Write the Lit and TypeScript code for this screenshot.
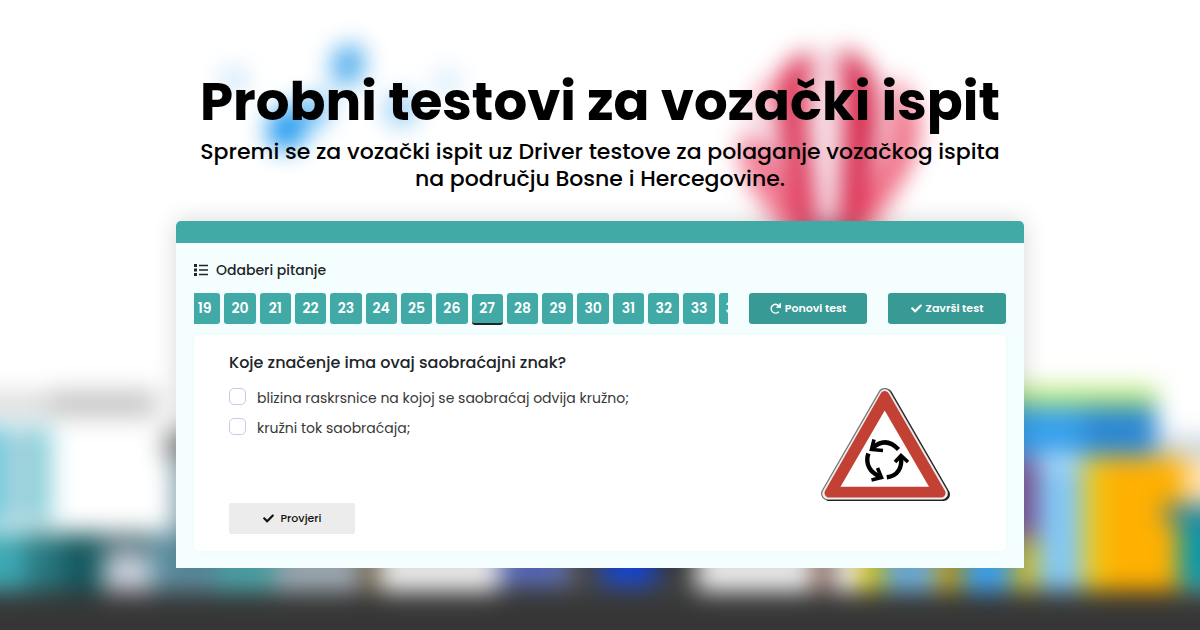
import { LitElement, html, svg, css } from "lit";
import { customElement, state } from "lit/decorators.js";

type Block = [x: number, y: number, w: number, h: number, fill: string];

const BLOCKS: Block[] = [
  // left building
  [-40, 394, 95, 20, "#d6d6d6"],
  [50, 391, 107, 26, "#c4c4c4"],
  [-40, 426, 48, 98, "#70cbe0"],
  [8, 426, 18, 98, "#b8d6de"],
  [26, 426, 25, 98, "#86ced8"],
  [164, 432, 60, 26, "#888888"],
  [172, 458, 60, 74, "#9dbcc8"],
  [-40, 533, 68, 80, "#3da8b2"],
  [26, 533, 40, 80, "#2a7880"],
  [62, 533, 42, 80, "#15595f"],
  [100, 533, 66, 24, "#4c6c74"],
  [150, 533, 70, 80, "#5e90a2"],
  // street level
  [216, 540, 60, 70, "#4fa9ad"],
  [276, 540, 84, 70, "#a5b2bb"],
  [362, 540, 15, 70, "#503a18"],
  [377, 540, 121, 70, "#f8f8f8"],
  [500, 540, 66, 44, "#5c70c8"],
  [568, 540, 34, 52, "#4a4a4a"],
  [602, 540, 54, 44, "#1448e4"],
  [656, 540, 40, 52, "#3c3c3c"],
  [700, 540, 112, 70, "#f8f8f8"],
  [814, 540, 18, 70, "#80584a"],
  [832, 540, 28, 70, "#fafafa"],
  [860, 540, 22, 70, "#e0cc00"],
  [882, 540, 54, 70, "#72b6e0"],
  [938, 540, 24, 70, "#c89c00"],
  [962, 540, 50, 70, "#42aaf8"],
  [1012, 530, 28, 80, "#d4bc24"],
  // right building
  [980, 387, 177, 19, "#b9ea74"],
  [980, 406, 104, 50, "#38a0ec"],
  [1084, 406, 73, 50, "#2c88d2"],
  [1156, 436, 80, 22, "#c9d6e2"],
  [980, 458, 58, 80, "#805898"],
  [1038, 464, 46, 150, "#82c8f6"],
  [1082, 457, 24, 155, "#ecc91c"],
  [1104, 457, 82, 155, "#ffb000"],
  [1184, 458, 60, 44, "#ffe2b0"],
  [1164, 504, 80, 18, "#3a7c98"],
  [1178, 520, 70, 68, "#0c97a8"],
];

const CHECK =
  "M173.9 439.4 7.5 273c-10-10-10-26.2 0-36.200l36.200-36.200c10-10 26.200-10 36.200 0L192 312.700 432.100 72.600c10-10 26.200-10 36.200 0l36.200 36.200c10 10 10 26.200 0 36.200L210.100 439.400c-10 10-26.200 10-36.200 0z";

const checkIcon = html`<svg class="icon" viewBox="0 0 512 512" aria-hidden="true"><path fill="currentColor" d=${CHECK} /></svg>`;

@customElement("street-backdrop")
export class StreetBackdrop extends LitElement {
  static styles = css`
    :host { display: block; }
    .scene { display: block; width: 100%; height: 100%; }
  `;

  render() {
    return html`
      <svg class="scene" viewBox="0 0 1200 630" preserveAspectRatio="xMidYMid slice" aria-hidden="true">
        <defs>
          <filter id="soft" filterUnits="userSpaceOnUse" x="-60" y="-60" width="1320" height="780" color-interpolation-filters="sRGB">
            <feGaussianBlur stdDeviation="12" />
          </filter>
        </defs>
        <rect width="1200" height="630" fill="#fff" />
        <g filter="url(#soft)">
          <rect x="-60" y="-60" width="1320" height="780" fill="#fff" />
          <ellipse cx="348" cy="65" rx="16" ry="21" fill="#48a8ec" transform="rotate(15 348 65)" />
          <ellipse cx="288" cy="128" rx="19" ry="23" fill="#1292ee" transform="rotate(35 288 128)" />
          <ellipse cx="312" cy="112" rx="22" ry="14" fill="#68baf4" transform="rotate(-35 312 112)" />
          <circle cx="234" cy="80" r="12" fill="#c0e0f8" />
          <circle cx="401" cy="110" r="16" fill="#90ccf5" />
          <circle cx="447" cy="82" r="12" fill="#cce7fa" />

          <path d="M828 52C792 54 758 82 747 120c-6 50 40 90 62 125h42c24-35 68-75 62-120-7-42-42-71-83-73z" fill="#f7e3ea" />
          <path d="M782 72c-18 8-30 20-36 38 10-4 20-6 30-4z" fill="#f7a8b8" />
          <path d="M804 54c-18 6-26 26-24 58 2 40 12 80 22 135h16c-4-55-12-95-13-133 0-28 3-46 9-60z" fill="#d81c42" />
          <path d="M844 50c18 4 30 24 31 60 1 42-12 86-22 137h-16c6-50 9-95 9-135 0-25-3-46-6-60z" fill="#d4143c" />
          <path d="M740 140c-6 32 30 72 52 106h22c-18-36-30-66-42-92-8-16-24-20-32-14z" fill="#f0708a" />
          <path d="M892 78c24 18 28 40 25 62-5 34-33 64-57 106h-20c18-44 44-74 52-106 4-18 3-40 0-62z" fill="#ee5c76" />
          <ellipse cx="832" cy="246" rx="26" ry="18" fill="#a04070" />

          ${BLOCKS.map(([x, y, w, h, fill]) => svg`<rect x=${x} y=${y} width=${w} height=${h} fill=${fill} />`)}
          <rect x="498" y="584" width="200" height="20" fill="#4c5054" />
          <circle cx="126" cy="573" r="22" fill="#ccd0dc" />
          <rect x="-60" y="591" width="1320" height="140" fill="#363636" />
        </g>
      </svg>
    `;
  }
}

@customElement("roundabout-sign")
export class RoundaboutSign extends LitElement {
  static styles = css`
    :host { display: block; }
    .sign { display: block; width: 100%; }
  `;

  render() {
    return html`
      <svg class="sign" viewBox="0 0 130 116" role="img" aria-label="Kružni tok">
        <g stroke-linejoin="round">
          <path d="M66 8 9.500 107.500h114z" fill="#222" stroke="#222" stroke-width="13" />
          <path d="M64.500 7.500 7.500 106.500h114z" fill="#777" stroke="#777" stroke-width="13" />
          <path d="M64.800 8 8 106.500h114z" fill="#f1eeee" stroke="#f1eeee" stroke-width="11.500" />
          <path d="M64.800 8.500 9 106h112z" fill="#c24034" stroke="#c24034" stroke-width="9" />
        </g>
        <path d="M64.700 23.500 20.500 99.700h88.500z" fill="#fff" />
        <g transform="translate(0 -4)" fill="none" stroke="#000">
          <g stroke-width="4.400">
            <path d="M78.500 66.500C70 57.500 61 57.500 52.500 65" />
            <path d="M48.300 70.500C45 81 50 89.500 60 93.500" />
            <path d="M66.800 94.300C77 93 82.500 86 81 73" />
          </g>
          <g stroke-width="3.600">
            <path d="M54 56.500 51.500 66.500 63 67.500" />
            <path d="M57.500 85 61.500 94.500 51.500 97" />
            <path d="M75 79 81 72.500 88 79" />
          </g>
        </g>
      </svg>
    `;
  }
}

@customElement("app-root")
export class AppRoot extends LitElement {
  static styles = css`
    * { box-sizing: border-box; }
    :host {
      display: block;
      position: relative;
      min-height: 100vh;
      overflow: hidden;
      font-family: Poppins, Inter, "Open Sans", sans-serif;
      color: #212529;
    }
    street-backdrop { position: absolute; inset: 0; }
    .page {
      position: relative;
      max-width: 848px;
      margin: 0 auto;
      padding: 70px 0 62px;
    }
    .hero { text-align: center; color: #000; }
    .title { margin: 0; font-size: 53px; line-height: 64px; font-weight: 700; white-space: nowrap; }
    .lead { margin: 4px auto 0; font-size: 22px; line-height: 27px; font-weight: 500; }
    .card {
      margin-top: 29px;
      border-radius: 5px 5px 0 0;
      background: #f5feff;
      box-shadow: 0 0 24px rgba(0, 0, 0, 0.16);
    }
    .bar { height: 22px; border-radius: 5px 5px 0 0; background: #41a9a6; }
    .body { padding: 16px 18px 17px; }
    .heading {
      display: flex;
      align-items: center;
      gap: 8px;
      margin: 0 0 12px;
      font-size: 14px;
      line-height: 22px;
      font-weight: 500;
    }
    .list-icon { width: 14px; height: 12px; }
    .toolbar { display: flex; gap: 21px; }
    .strip { flex: 1; min-width: 0; overflow: hidden; }
    .numbers { display: flex; gap: 4px; margin: 0 -22px 0 -5px; }
    button { border: 0; padding: 0; font: inherit; cursor: pointer; }
    .number {
      flex: 1;
      height: 31px;
      border-radius: 3px;
      background: #41a9a6;
      color: #fff;
      font-size: 14px;
      font-weight: 600;
    }
    .current { margin-top: 1px; border-bottom: 2px solid #212529; }
    .action {
      display: flex;
      align-items: center;
      justify-content: center;
      gap: 4px;
      width: 118px;
      height: 31px;
      border-radius: 3px;
      background: #389a95;
      color: #fff;
      font-size: 11px;
      font-weight: 600;
    }
    .icon { width: 11px; height: 11px; }
    .panel {
      display: flex;
      margin-top: 10px;
      padding: 16px 56px 17px 35px;
      border-radius: 5px;
      background: #fff;
      box-shadow: 0 0 6px rgba(65, 169, 166, 0.05);
    }
    .quiz { flex: 1; margin: 0; border: 0; padding: 0; min-width: 0; }
    .question { padding: 0; font-size: 16px; line-height: 24px; font-weight: 500; }
    .answer {
      display: flex;
      gap: 11px;
      height: 30px;
      font-size: 14px;
      line-height: 22px;
      color: #383838;
    }
    .answers { padding-top: 12px; }
    .tick {
      appearance: none;
      flex: none;
      width: 17px;
      height: 17px;
      margin: 1px 0 0;
      border: 1px solid #c9cae8;
      border-radius: 5px;
      background: #fff;
    }
    .tick:checked { background: #41a9a6; }
    .check {
      display: flex;
      align-items: center;
      justify-content: center;
      gap: 7px;
      width: 126px;
      height: 31px;
      margin-top: 56px;
      border-radius: 2px;
      background: #ececec;
      color: #111;
      font-size: 11px;
      font-weight: 500;
    }
    roundabout-sign { flex: none; width: 130px; padding-top: 36px; }
  `;

  @state() private current = 27;

  private numbers = Array.from({ length: 16 }, (_, i) => i + 19);
  private answers = [
    "blizina raskrsnice na kojoj se saobraćaj odvija kružno;",
    "kružni tok saobraćaja;",
  ];

  render() {
    return html`
      <street-backdrop></street-backdrop>
      <main class="page">
        <header class="hero">
          <h1 class="title">Probni testovi za vozački ispit</h1>
          <p class="lead">
            Spremi se za vozački ispit uz Driver testove za polaganje vozačkog ispita<br />na području Bosne i Hercegovine.
          </p>
        </header>
        <section class="card">
          <div class="bar"></div>
          <div class="body">
            <h2 class="heading">
              <svg class="list-icon" viewBox="0 0 14 12" aria-hidden="true">
                <path fill="currentColor" d="M0 0h3v3H0zM0 4.500h3v3H0zM0 9h3v3H0zM5 .7h9v1.600H5zM5 5.200h9v1.600H5zM5 9.700h9v1.600H5z" />
              </svg>
              Odaberi pitanje
            </h2>
            <div class="toolbar">
              <div class="strip">
                <nav class="numbers" aria-label="Pitanja">
                  ${this.numbers.map(
                    (n) => html`<button
                      class="number ${n === this.current ? "current" : ""}"
                      @click=${() => (this.current = n)}
                    >${n}</button>`,
                  )}
                </nav>
              </div>
              <button class="action">
                <svg class="icon" viewBox="0 0 12 12" aria-hidden="true">
                  <path fill="none" stroke="currentColor" stroke-width="1.600" d="M10.300 4A4.800 4.800 0 1 0 9.600 9.500M11.200.4v4.100H7" />
                  <path fill="currentColor" d="M11.600.4v4.400H7.200z" />
                </svg>
                Ponovi test
              </button>
              <button class="action">${checkIcon} Završi test</button>
            </div>
            <div class="panel">
              <fieldset class="quiz">
                <legend class="question">Koje značenje ima ovaj saobraćajni znak?</legend>
                <div class="answers">
                  ${this.answers.map(
                    (text, i) => html`<label class="answer" for="answer-${i}">
                      <input class="tick" type="checkbox" id="answer-${i}" />${text}
                    </label>`,
                  )}
                </div>
                <button class="check">${checkIcon} Provjeri</button>
              </fieldset>
              <roundabout-sign></roundabout-sign>
            </div>
          </div>
        </section>
      </main>
    `;
  }
}
